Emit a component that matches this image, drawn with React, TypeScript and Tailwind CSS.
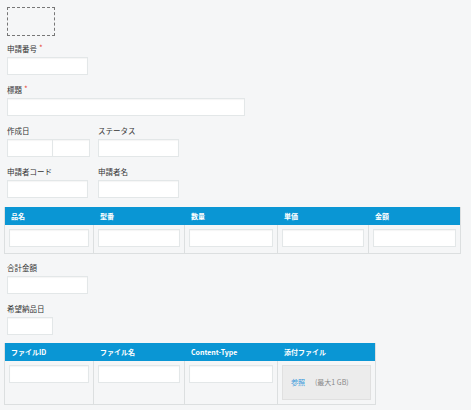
import React from 'react';

const font = { fontFamily: '"Noto Sans CJK JP", "Noto Sans", sans-serif' };

function Label({ text, required }: { text: string; required?: boolean }) {
  return (
    <div className="flex h-[10px] items-start text-[7.5px] leading-[10px] text-[#333]">
      <span>{text}</span>
      {required && <span className="ml-[2px] text-[8px] leading-[8px] text-[#e74c3c]">*</span>}
    </div>
  );
}

function Input({ className }: { className: string }) {
  return <div className={`h-[18px] border border-[#e3e7e8] bg-white shadow-[inset_0_1px_1px_rgba(0,0,0,0.04)] ${className}`} />;
}

function Field({ label, required, children }: { label: string; required?: boolean; children: React.ReactNode }) {
  return (
    <div className="flex flex-col gap-[3px]">
      <Label text={label} required={required} />
      {children}
    </div>
  );
}

function TableHeader({ cols, widths }: { cols: string[]; widths: string }) {
  return (
    <div className={`grid ${widths} h-[18px] bg-[#0a96d4]`}>
      {cols.map((c) => (
        <div key={c} className="flex items-center pl-[6px] text-[7px] font-bold text-white">
          {c}
        </div>
      ))}
    </div>
  );
}

export default function App() {
  const items = ['品名', '型番', '数量', '単価', '金額'];
  const files = ['ファイルID', 'ファイル名', 'Content-Type', '添付ファイル'];
  const itemCols = 'grid-cols-[89px_91px_93px_91px_1fr]';
  const fileCols = 'grid-cols-[89px_91px_93px_1fr]';

  return (
    <div className="h-[414px] w-[474px] bg-white" style={font}>
      <div className="h-[410px] w-[471px] bg-[#f5f6f7] pt-[7px]">
        <div className="ml-[7px] h-[29px] w-[48px] border border-dashed border-[#777]" />

        <div className="ml-[7px] mt-[8px] flex flex-col gap-[10px]">
          <Field label="申請番号" required>
            <Input className="w-[81px]" />
          </Field>
          <Field label="標題" required>
            <Input className="w-[238px]" />
          </Field>
          <div className="flex gap-[8px]">
            <Field label="作成日">
              <div className="flex">
                <Input className="w-[46px]" />
                <Input className="w-[37px] border-l-0" />
              </div>
            </Field>
            <Field label="ステータス">
              <Input className="w-[81px]" />
            </Field>
          </div>
          <div className="flex gap-[10px]">
            <Field label="申請者コード">
              <Input className="w-[81px]" />
            </Field>
            <Field label="申請者名">
              <Input className="w-[81px]" />
            </Field>
          </div>
        </div>

        <div className="ml-[4px] mt-[9px] w-[457px] border border-t-0 border-[#dcdfe0]">
          <TableHeader cols={items} widths={itemCols} />
          <div className={`grid h-[28px] ${itemCols}`}>
            {items.map((c, i) => (
              <div key={c} className={`px-[4px] pt-[4px] ${i < 4 ? 'border-r border-[#dcdfe0]' : ''}`}>
                <Input className="w-full" />
              </div>
            ))}
          </div>
        </div>

        <div className="ml-[7px] mt-[9px] flex flex-col gap-[10px]">
          <Field label="合計金額">
            <Input className="w-[81px]" />
          </Field>
          <Field label="希望納品日">
            <Input className="w-[46px]" />
          </Field>
        </div>

        <div className="ml-[4px] mt-[8px] w-[372px] border border-t-0 border-[#dcdfe0]">
          <TableHeader cols={files} widths={fileCols} />
          <div className={`grid h-[43px] ${fileCols}`}>
            {files.slice(0, 3).map((c) => (
              <div key={c} className="border-r border-[#dcdfe0] px-[4px] pt-[4px]">
                <Input className="w-full" />
              </div>
            ))}
            <div className="px-[4px] py-[4px]">
              <div className="flex h-[35px] items-center gap-[10px] border border-[#e0e0e0] bg-[#ececec] pl-[8px] text-[7px]">
                <span className="text-[#3498db]">参照</span>
                <span className="text-[#888]">(最大1 GB)</span>
              </div>
            </div>
          </div>
        </div>
      </div>
    </div>
  );
}
